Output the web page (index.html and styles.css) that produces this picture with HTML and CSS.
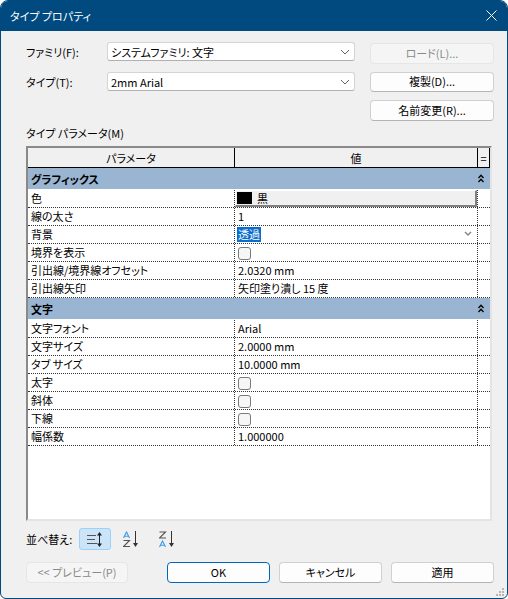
FILE: index.html
```html
<!DOCTYPE html>
<html lang="ja">
<head>
<meta charset="utf-8">
<title>タイプ プロパティ</title>
<link rel="stylesheet" href="styles.css">
</head>
<body>
<div class="window">
  <header class="titlebar">
    <span class="title">タイプ プロパティ</span>
    <svg class="close" width="11" height="11" viewBox="0 0 11 11"><path d="M.5.5l10 10M10.5.5l-10 10" stroke="#fff" fill="none"/></svg>
  </header>
  <main class="content">
    <section class="top">
      <div class="fields">
        <div class="field">
          <span class="field-label">ファミリ(F):</span>
          <div class="combo"><span>システムファミリ: 文字</span><svg class="chev" width="10" height="6" viewBox="0 0 10 6"><path d="M1 1l4 4 4-4" stroke="#666" fill="none"/></svg></div>
        </div>
        <div class="field">
          <span class="field-label">タイプ(T):</span>
          <div class="combo"><span>2mm Arial</span><svg class="chev" width="10" height="6" viewBox="0 0 10 6"><path d="M1 1l4 4 4-4" stroke="#666" fill="none"/></svg></div>
        </div>
      </div>
      <div class="side-buttons">
        <button class="btn disabled">ロード(L)...</button>
        <button class="btn">複製(D)...</button>
        <button class="btn">名前変更(R)...</button>
      </div>
    </section>
    <div class="table-label">タイプ パラメータ(M)</div>
    <div class="table">
      <div class="thead">
        <div class="th name">パラメータ</div>
        <div class="th value">値</div>
        <div class="th eq">=</div>
      </div>
      <div class="group"><span>グラフィックス</span><svg width="6" height="9" viewBox="0 0 6 9"><path d="M.5 4L3 1.200 5.500 4M.5 8L3 5.200 5.500 8" stroke="#000" stroke-width="1.300" fill="none"/></svg></div>
      <div class="row"><div class="c name">色</div><div class="c value"><div class="colorbtn"><i class="swatch"></i><span>黒</span></div></div><div class="c eq"></div></div>
      <div class="row"><div class="c name">線の太さ</div><div class="c value">1</div><div class="c eq"></div></div>
      <div class="row"><div class="c name">背景</div><div class="c value between"><span class="selected">透過</span><svg width="8" height="6" viewBox="0 0 8 6"><path d="M1 1l3 3 3-3" stroke="#888" stroke-width="1.500" fill="none"/></svg></div><div class="c eq"></div></div>
      <div class="row"><div class="c name">境界を表示</div><div class="c value"><i class="check"></i></div><div class="c eq"></div></div>
      <div class="row"><div class="c name">引出線/境界線オフセット</div><div class="c value">2.0320 mm</div><div class="c eq"></div></div>
      <div class="row"><div class="c name">引出線矢印</div><div class="c value">矢印塗り潰し 15 度</div><div class="c eq"></div></div>
      <div class="group"><span>文字</span><svg width="6" height="9" viewBox="0 0 6 9"><path d="M.5 4L3 1.200 5.500 4M.5 8L3 5.200 5.500 8" stroke="#000" stroke-width="1.300" fill="none"/></svg></div>
      <div class="row"><div class="c name">文字フォント</div><div class="c value">Arial</div><div class="c eq"></div></div>
      <div class="row"><div class="c name">文字サイズ</div><div class="c value">2.0000 mm</div><div class="c eq"></div></div>
      <div class="row"><div class="c name">タブ サイズ</div><div class="c value">10.0000 mm</div><div class="c eq"></div></div>
      <div class="row"><div class="c name">太字</div><div class="c value"><i class="check"></i></div><div class="c eq"></div></div>
      <div class="row"><div class="c name">斜体</div><div class="c value"><i class="check"></i></div><div class="c eq"></div></div>
      <div class="row"><div class="c name">下線</div><div class="c value"><i class="check"></i></div><div class="c eq"></div></div>
      <div class="row"><div class="c name">幅係数</div><div class="c value">1.000000</div><div class="c eq"></div></div>
    </div>
    <div class="sortbar">
      <span class="sort-label">並べ替え:</span>
      <div class="sort active"><svg width="16" height="17" viewBox="0 0 16 17"><path d="M0 4.500h9M0 8.500h8M0 12.500h10" stroke="#555" fill="none"/><path d="M12.500 3v11" stroke="#222"/><path d="M10 4.500L12.500 1 15 4.500zM10 12.500L12.500 16 15 12.500z" fill="#222"/></svg></div>
      <div class="sort"><svg width="16" height="17" viewBox="0 0 16 17"><path d="M.5 7L3.500 1 6.500 7M1.300 5.200h4.400" stroke="#3b9aeb" stroke-width="1.100" fill="none"/><path d="M.5 9.500h6L.5 15.500h6.500" stroke="#555" stroke-width="1.100" fill="none"/><path d="M12.500 0v13" stroke="#333"/><path d="M10 12h5l-2.500 4z" fill="#333"/></svg></div>
      <div class="sort"><svg width="16" height="17" viewBox="0 0 16 17"><path d="M.5 1h6L.5 7h6.500" stroke="#555" stroke-width="1.100" fill="none"/><path d="M.5 16L3.500 10 6.500 16M1.300 14.200h4.400" stroke="#3b9aeb" stroke-width="1.100" fill="none"/><path d="M12.500 0v13" stroke="#333"/><path d="M10 12h5l-2.500 4z" fill="#333"/></svg></div>
    </div>
    <footer class="footer">
      <button class="btn disabled preview">&lt;&lt; プレビュー(P)</button>
      <div class="actions">
        <button class="btn primary">OK</button>
        <button class="btn">キャンセル</button>
        <button class="btn">適用</button>
      </div>
    </footer>
  </main>
  <svg class="grip" width="8" height="8" viewBox="0 0 8 8"><path d="M6 0h2v2H6zM3 3h2v2H3zM6 3h2v2H6zM0 6h2v2H0zM3 6h2v2H3zM6 6h2v2H6z" fill="#b5b5b5"/></svg>
</div>
</body>
</html>
```
FILE: styles.css
```css
* { box-sizing: border-box; }
html, body { margin: 0; padding: 0; background: #fff; }
body {
  width: 508px; height: 599px;
  font: 400 11px/14px "Noto Sans CJK JP", "Noto Sans", sans-serif;
  font-feature-settings: "palt";
  color: #000;
}
.window {
  position: relative;
  width: 508px; height: 599px;
  border: 1px solid #004a80;
  border-radius: 8px 8px 6px 6px;
  overflow: hidden;
  background: #f0f0f0;
  display: flex; flex-direction: column;
}
.titlebar {
  height: 30px; flex: none;
  background: #004a80; color: #fff;
  display: flex; align-items: center; justify-content: space-between;
  padding: 0 10px 0 9px;
  font-size: 11px;
}
.close { display: block; margin-top: -2px; }
.content { flex: 1; padding: 11px 13px 0 25px; display: flex; flex-direction: column; }
.top { display: flex; justify-content: space-between; height: 84px; }
.fields { display: flex; flex-direction: column; gap: 11px; }
.field { display: flex; align-items: center; }
.field-label { width: 81px; }
.combo {
  width: 248px; height: 19px;
  background: #fff;
  border: 1px solid #d4d4d4; border-bottom-color: #b0b0b0;
  border-radius: 3px;
  display: flex; align-items: center; justify-content: space-between;
  padding: 0 4px 0 3px;
}
.side-buttons { display: flex; flex-direction: column; gap: 8px; padding-top: 1px; }
.side-buttons .btn { width: 124px; height: 20.500px; padding-bottom: 1px; }
.btn {
  font: inherit; color: #000;
  font-feature-settings: inherit;
  background: #fdfdfd;
  border: 1px solid #d0d0d0; border-bottom-color: #b4b4b4;
  border-radius: 4px;
  padding: 0;
}
.btn.disabled { background: #f5f5f5; color: #8a8a8a; border-color: #e6e6e6; }
.btn.primary { border: 1px solid #0067c0; }
.table-label { height: 14px; line-height: 14px; }
.table {
  margin-top: 6px;
  width: 466px; height: 375px; flex: none;
  background: #fff;
  border: 2px solid #e4e4e4;
  border-top-color: #8a8a8a; border-left-color: #8a8a8a;
}
.thead {
  display: grid; grid-template-columns: 206px 243px 13px;
  height: 20px; background: #f0f0f0;
  border-bottom: 1px solid #000;
}
.th { display: flex; align-items: center; justify-content: center; }
.th.value { border-left: 1px solid #000; }
.th.eq { border-left: 1px solid #000; border-right: 1px solid #000; }
.group {
  height: 22px; background: #9ab5d1;
  border-bottom: 1px solid #fff;
  font-weight: 700;
  display: flex; align-items: center; justify-content: space-between;
  padding: 0 6px 0 3px;
}
.row {
  display: grid; grid-template-columns: 206px 243px 13px;
  height: 18px;
  border-bottom: 1px dotted #333;
}
.c { padding: 0 3px 1px; display: flex; align-items: center; white-space: nowrap; min-width: 0; overflow: hidden; }
.c.value { border-left: 1px dotted #333; padding-left: 3px; }
.c.eq { border-left: 1px dotted #333; }
.between { justify-content: space-between; padding-right: 5px; }
.selected { background: #0a6ccc; color: #fff; line-height: 15px; padding: 0 1px; width: 24px; margin-left: -1px; }
.colorbtn {
  width: 242px; height: 17px; margin: 1px 0 0 -3px; flex: none;
  background: #f0f0f0;
  border: 1px solid #fff; border-right: 2px solid #808080; border-bottom: 2px solid #808080;
  display: flex; align-items: center; gap: 5px; padding-left: 1px;
}
.swatch { width: 15px; height: 12px; background: #000; display: block; flex: none; }
.check {
  display: block; width: 13px; height: 13px;
  margin: 3px 0 0;
  background: #f6f6f6; border: 1px solid #7a7a7a; border-radius: 3px;
}
.sortbar { display: flex; align-items: center; height: 22px; margin-top: 7px; }
.sort-label { width: 53px; padding-bottom: 1px; }
.sort { width: 32px; height: 22px; border: 1px solid transparent; border-radius: 3px; margin-right: 4px; display: flex; align-items: center; justify-content: center; }
.sort.active { background: #cce4f7; border-color: #99d1ff; }
.footer { display: flex; justify-content: space-between; margin-top: 12px; }
.footer .btn { height: 21px; padding-bottom: 2px; }
.preview { width: 102px; }
.actions { display: flex; gap: 9px; }
.actions .btn { width: 103px; }
.grip { position: absolute; right: 3px; bottom: 2px; }
```
